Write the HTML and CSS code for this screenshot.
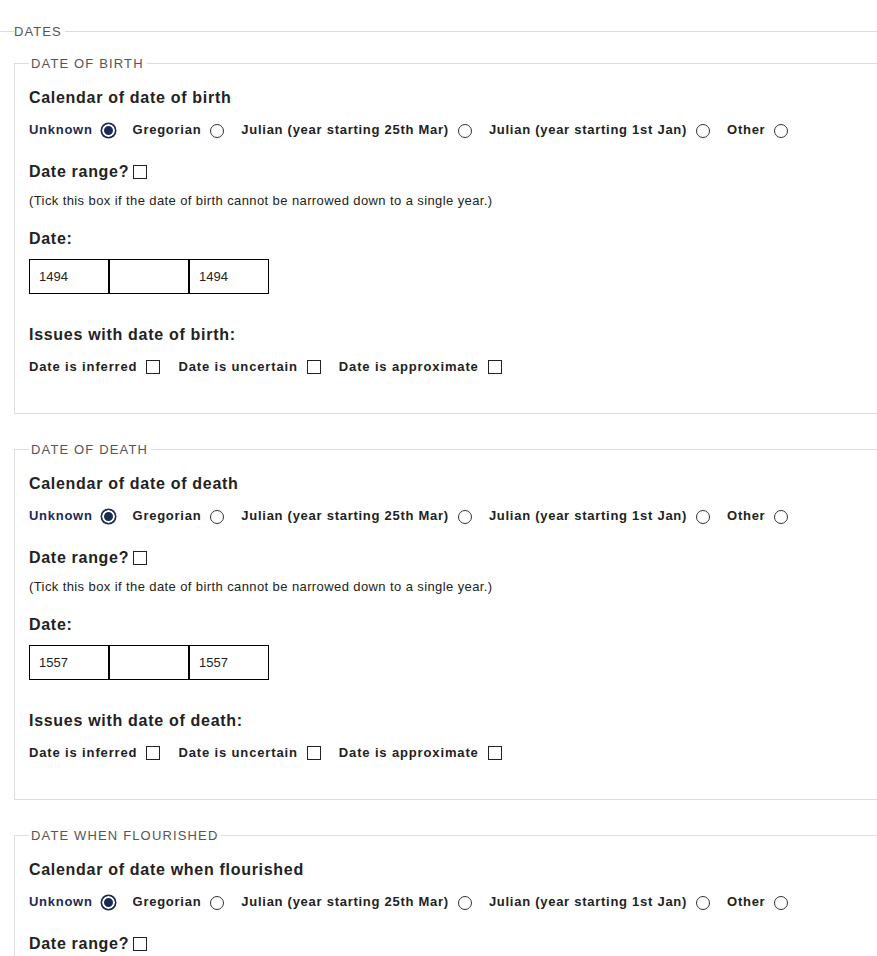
FILE: index.html
```html
<!DOCTYPE html>
<html lang="en">
<head>
<meta charset="utf-8">
<title>Dates</title>
<link rel="stylesheet" href="styles.css">
</head>
<body>
<fieldset class="group">
  <legend class="group-legend">Dates</legend>

  <fieldset class="date-set">
    <legend class="set-legend">Date of birth</legend>
    <h3 class="q first-q">Calendar of date of birth</h3>
    <div class="choices calendar">
      <label class="choice selected">Unknown <input type="radio" name="cal-birth" checked></label>
      <label class="choice">Gregorian <input type="radio" name="cal-birth"></label>
      <label class="choice">Julian (year starting 25th Mar) <input type="radio" name="cal-birth"></label>
      <label class="choice">Julian (year starting 1st Jan) <input type="radio" name="cal-birth"></label>
      <label class="choice">Other <input type="radio" name="cal-birth"></label>
    </div>
    <label class="q range">Date range? <input type="checkbox"></label>
    <p class="hint">(Tick this box if the date of birth cannot be narrowed down to a single year.)</p>
    <h3 class="q date-q">Date:</h3>
    <div class="years">
      <input class="year" type="text" value="1494">
      <input class="year" type="text" value="">
      <input class="year" type="text" value="1494">
    </div>
    <h3 class="q issues-q">Issues with date of birth:</h3>
    <div class="choices issues">
      <label class="choice">Date is inferred <input type="checkbox"></label>
      <label class="choice">Date is uncertain <input type="checkbox"></label>
      <label class="choice">Date is approximate <input type="checkbox"></label>
    </div>
  </fieldset>

  <fieldset class="date-set">
    <legend class="set-legend">Date of death</legend>
    <h3 class="q first-q">Calendar of date of death</h3>
    <div class="choices calendar">
      <label class="choice selected">Unknown <input type="radio" name="cal-death" checked></label>
      <label class="choice">Gregorian <input type="radio" name="cal-death"></label>
      <label class="choice">Julian (year starting 25th Mar) <input type="radio" name="cal-death"></label>
      <label class="choice">Julian (year starting 1st Jan) <input type="radio" name="cal-death"></label>
      <label class="choice">Other <input type="radio" name="cal-death"></label>
    </div>
    <label class="q range">Date range? <input type="checkbox"></label>
    <p class="hint">(Tick this box if the date of birth cannot be narrowed down to a single year.)</p>
    <h3 class="q date-q">Date:</h3>
    <div class="years">
      <input class="year" type="text" value="1557">
      <input class="year" type="text" value="">
      <input class="year" type="text" value="1557">
    </div>
    <h3 class="q issues-q">Issues with date of death:</h3>
    <div class="choices issues">
      <label class="choice">Date is inferred <input type="checkbox"></label>
      <label class="choice">Date is uncertain <input type="checkbox"></label>
      <label class="choice">Date is approximate <input type="checkbox"></label>
    </div>
  </fieldset>

  <fieldset class="date-set">
    <legend class="set-legend">Date when flourished</legend>
    <h3 class="q first-q">Calendar of date when flourished</h3>
    <div class="choices calendar">
      <label class="choice selected">Unknown <input type="radio" name="cal-fl" checked></label>
      <label class="choice">Gregorian <input type="radio" name="cal-fl"></label>
      <label class="choice">Julian (year starting 25th Mar) <input type="radio" name="cal-fl"></label>
      <label class="choice">Julian (year starting 1st Jan) <input type="radio" name="cal-fl"></label>
      <label class="choice">Other <input type="radio" name="cal-fl"></label>
    </div>
    <label class="q range">Date range? <input type="checkbox"></label>
    <p class="hint">(Tick this box if the date when flourished cannot be narrowed down to a single year.)</p>
    <h3 class="q date-q">Date:</h3>
    <div class="years">
      <input class="year" type="text" value="">
      <input class="year" type="text" value="">
      <input class="year" type="text" value="">
    </div>
    <h3 class="q issues-q">Issues with date when flourished:</h3>
    <div class="choices issues">
      <label class="choice">Date is inferred <input type="checkbox"></label>
      <label class="choice">Date is uncertain <input type="checkbox"></label>
      <label class="choice">Date is approximate <input type="checkbox"></label>
    </div>
  </fieldset>
</fieldset>
</body>
</html>
```

FILE: styles.css
```css
html, body {
  margin: 0;
  padding: 0;
  background: #fff;
}

body {
  font-family: "Liberation Sans", Arial, sans-serif;
  color: #222;
}

.group {
  margin: 23px 0 0 0;
  padding: 0 0 0 14px;
  border: 0;
  border-top: 1px solid #ddd;
  min-width: 0;
}

.group-legend {
  padding: 0 3px 0 0;
  font-size: 13px;
  line-height: 16px;
  letter-spacing: 1.1px;
  text-transform: uppercase;
  color: #555;
  position: relative;
  top: 1px;
}

.date-set {
  margin: 16px 0 0 0;
  padding: 0 14px 36px 14px;
  border: 1px solid #ddd;
  border-right: 0;
  min-width: 0;
}

.date-set + .date-set {
  margin-top: 27px;
}

.set-legend {
  padding: 0 3px 0 2px;
  font-size: 13px;
  line-height: 16px;
  letter-spacing: 1.15px;
  text-transform: uppercase;
  color: #555;
  position: relative;
  top: 1px;
}

.q {
  margin: 16px 0 0 0;
  font-size: 16px;
  line-height: 20px;
  font-weight: bold;
  letter-spacing: 0.7px;
  color: #222;
}

.first-q {
  margin-top: 17px;
}

.choices {
  display: flex;
  align-items: center;
  height: 20px;
}

.calendar {
  gap: 17px;
  margin-top: 12px;
}

.choice {
  display: flex;
  align-items: center;
  gap: 9px;
  font-size: 13px;
  line-height: 20px;
  font-weight: bold;
  letter-spacing: 0.73px;
  color: #222;
}

.choice.selected {
  color: #1b2a55;
}

.range {
  display: flex;
  align-items: center;
  gap: 4px;
  margin-top: 22px;
}

.hint {
  margin: 11px 0 0 0;
  font-size: 13px;
  line-height: 16px;
  letter-spacing: 0.4px;
  color: #222;
}

.date-q {
  margin-top: 20px;
}

.years {
  display: flex;
  margin-top: 10px;
}

.year {
  box-sizing: border-box;
  width: 80px;
  height: 35px;
  margin: 0;
  padding: 0 9px;
  border: 1px solid #000;
  border-radius: 0;
  font-family: "Liberation Sans", Arial, sans-serif;
  font-size: 13px;
  color: #222;
  background: #fff;
  outline: none;
}

.issues-q {
  margin-top: 31px;
}

.issues {
  margin-top: 12px;
  gap: 18px;
}

.issues .choice {
  gap: 9px;
  letter-spacing: 0.86px;
}

input[type="radio"] {
  appearance: none;
  -webkit-appearance: none;
  box-sizing: border-box;
  width: 14px;
  height: 14px;
  margin: 1px 0 0 0;
  border: 1.4px solid #333;
  border-radius: 50%;
  background: #fff;
  flex: none;
}

input[type="radio"]:checked {
  width: 15px;
  height: 15px;
  margin-left: -1px;
  border: 1.5px solid #1b2a55;
  background: #1b2a55;
  box-shadow: inset 0 0 0 2px #fff, 0 0 0 0.5px #1b2a55;
}

input[type="checkbox"] {
  appearance: none;
  -webkit-appearance: none;
  box-sizing: border-box;
  width: 14px;
  height: 14px;
  margin: 0;
  border: 1.5px solid #222;
  border-radius: 0;
  background: #fff;
  flex: none;
}
```
